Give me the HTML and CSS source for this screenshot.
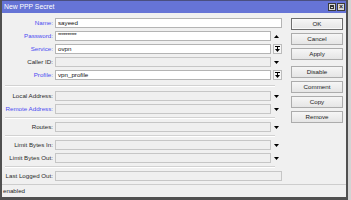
FILE: index.html
```html
<!DOCTYPE html>
<html>
<head>
<meta charset="utf-8">
<link rel="stylesheet" href="styles.css">
</head>
<body>
<div class="window">
  <div class="titlebar">
    <span class="title">New PPP Secret</span>
    <span class="tb-icons">
      <span class="tb-btn"><span class="max"></span></span>
      <span class="tb-btn close">×</span>
    </span>
  </div>
  <div class="main">
    <div class="form">
      <div class="row"><span class="lbl req">Name:</span><div class="field"><div class="input">sayeed</div></div></div>
      <div class="row"><span class="lbl req">Password:</span><div class="field"><div class="input pw">**********</div><div class="widget"><svg width="5" height="3" viewBox="0 0 5 3"><path d="M0 3H5L2.5 0Z"/></svg></div></div></div>
      <div class="row"><span class="lbl req">Service:</span><div class="field"><div class="input">ovpn</div><div class="widget"><span class="wbtn"><svg width="5" height="6" viewBox="0 0 5 6"><path d="M0 0.5H5" stroke="#000" stroke-width="1"/><path d="M2.5 0V3" stroke="#000" stroke-width="1"/><path d="M0 3H5L2.5 6Z"/></svg></span></div></div></div>
      <div class="row"><span class="lbl">Caller ID:</span><div class="field"><div class="input dis"></div><div class="widget"><svg width="5" height="3" viewBox="0 0 5 3"><path d="M0 0H5L2.5 3Z"/></svg></div></div></div>
      <div class="row"><span class="lbl req">Profile:</span><div class="field"><div class="input">vpn_profile</div><div class="widget"><span class="wbtn"><svg width="5" height="6" viewBox="0 0 5 6"><path d="M0 0.5H5" stroke="#000" stroke-width="1"/><path d="M2.5 0V3" stroke="#000" stroke-width="1"/><path d="M0 3H5L2.5 6Z"/></svg></span></div></div></div>
      <div class="sep first"></div>
      <div class="row"><span class="lbl">Local Address:</span><div class="field"><div class="input dis"></div><div class="widget"><svg width="5" height="3" viewBox="0 0 5 3"><path d="M0 0H5L2.5 3Z"/></svg></div></div></div>
      <div class="row"><span class="lbl req">Remote Address:</span><div class="field"><div class="input dis"></div><div class="widget"><svg width="5" height="3" viewBox="0 0 5 3"><path d="M0 0H5L2.5 3Z"/></svg></div></div></div>
      <div class="sep"></div>
      <div class="row"><span class="lbl">Routes:</span><div class="field"><div class="input dis"></div><div class="widget"><svg width="5" height="3" viewBox="0 0 5 3"><path d="M0 0H5L2.5 3Z"/></svg></div></div></div>
      <div class="sep"></div>
      <div class="row"><span class="lbl">Limit Bytes In:</span><div class="field"><div class="input dis"></div><div class="widget"><svg width="5" height="3" viewBox="0 0 5 3"><path d="M0 0H5L2.5 3Z"/></svg></div></div></div>
      <div class="row"><span class="lbl">Limit Bytes Out:</span><div class="field"><div class="input dis"></div><div class="widget"><svg width="5" height="3" viewBox="0 0 5 3"><path d="M0 0H5L2.5 3Z"/></svg></div></div></div>
      <div class="sep"></div>
      <div class="row"><span class="lbl">Last Logged Out:</span><div class="field"><div class="input dis"></div></div></div>
    </div>
    <div class="buttons">
      <div class="btn default">OK</div>
      <div class="btn">Cancel</div>
      <div class="btn gap">Apply</div>
      <div class="btn">Disable</div>
      <div class="btn">Comment</div>
      <div class="btn">Copy</div>
      <div class="btn">Remove</div>
    </div>
  </div>
  <div class="status">enabled</div>
</div>
</body>
</html>
```

FILE: styles.css
```css
html, body {
  margin: 0;
  padding: 0;
}
body {
  width: 351px;
  height: 200px;
  overflow: hidden;
  background: #d4d4d4;
  font-family: "Liberation Sans", Arial, sans-serif;
  color: #1e1e1e;
}
.window {
  width: 348px;
  height: 200px;
  box-sizing: border-box;
  border-left: 2px solid #505050;
  border-right: 2px solid #505050;
  border-bottom: 3px solid #505050;
  background: #f0f0f0;
  display: flex;
  flex-direction: column;
}
.titlebar {
  height: 13px;
  box-sizing: border-box;
  border-top: 1px solid #4a4f80;
  background: #6674d6;
  display: flex;
  align-items: center;
  justify-content: space-between;
  padding-left: 2px;
  padding-right: 1px;
}
.title {
  color: #fff;
  font-size: 6.8px;
  line-height: 10px;
}
.tb-icons {
  display: flex;
  gap: 0;
}
.tb-btn {
  width: 8px;
  height: 8px;
  box-sizing: border-box;
  border: 1px solid #3a3a3a;
  background: #d8d8d8;
  display: flex;
  align-items: center;
  justify-content: center;
  font-size: 7px;
  line-height: 6px;
  color: #222;
}
.tb-btn.close {
  margin-left: 1px;
  font-weight: bold;
}
.max {
  width: 4px;
  height: 4px;
  border: 1px solid #333;
  border-top-width: 2px;
  box-sizing: border-box;
}
.main {
  flex: 1;
  display: flex;
  padding-top: 5px;
}
.form {
  width: 288px;
  box-sizing: border-box;
  padding-right: 8px;
  display: flex;
  flex-direction: column;
}
.row {
  display: flex;
  align-items: center;
  height: 10px;
  margin-bottom: 3px;
}
.lbl {
  width: 51px;
  margin-right: 2px;
  text-align: right;
  font-size: 6.2px;
  line-height: 10px;
  white-space: nowrap;
  color: #2a2a2a;
}
.lbl.req {
  color: #4b4bf0;
}
.field {
  flex: 1;
  display: flex;
  height: 10px;
}
.input {
  flex: 1;
  height: 10px;
  box-sizing: border-box;
  border: 1px solid #b4b4b4;
  background: #fff;
  font-size: 6.2px;
  line-height: 8px;
  padding-left: 2px;
  color: #111;
  white-space: nowrap;
  overflow: hidden;
}
.input.pw {
  font-size: 5.5px;
  line-height: 6px;
  letter-spacing: -0.3px;
}
.input.dis {
  background: #efefef;
  border-color: #c6c6c6;
}
.widget {
  width: 11px;
  display: flex;
  align-items: center;
  justify-content: center;
}
.widget svg {
  display: block;
  fill: #000;
}
.wbtn {
  width: 9px;
  height: 10px;
  margin-left: 1px;
  box-sizing: border-box;
  border: 1px solid #bcbcbc;
  background: #f6f6f6;
  display: flex;
  align-items: center;
  justify-content: center;
}
.sep {
  height: 0;
  border-top: 1px solid #d2d2d2;
  border-bottom: 1px solid #ffffff;
  margin: 0 7px 3px 3px;
}
.sep.first {
  margin-top: 2px;
  margin-bottom: 4px;
}
.buttons {
  width: 52px;
  margin-left: 1px;
  display: flex;
  flex-direction: column;
}
.btn {
  height: 12px;
  box-sizing: border-box;
  border: 1px solid #acacac;
  background: linear-gradient(#f6f6f6, #e5e5e5);
  font-size: 6.2px;
  line-height: 10px;
  text-align: center;
  color: #222;
  margin-bottom: 3px;
}
.btn.default {
  border-color: #6e6e6e;
  box-shadow: inset 0 0 0 1px #f8f8f8;
}
.btn.gap {
  margin-bottom: 6px;
}
.status {
  height: 13px;
  box-sizing: border-box;
  border-top: 1px solid #cdcdcd;
  font-size: 6.2px;
  line-height: 11px;
  padding-left: 1px;
  color: #1e1e1e;
}
```
